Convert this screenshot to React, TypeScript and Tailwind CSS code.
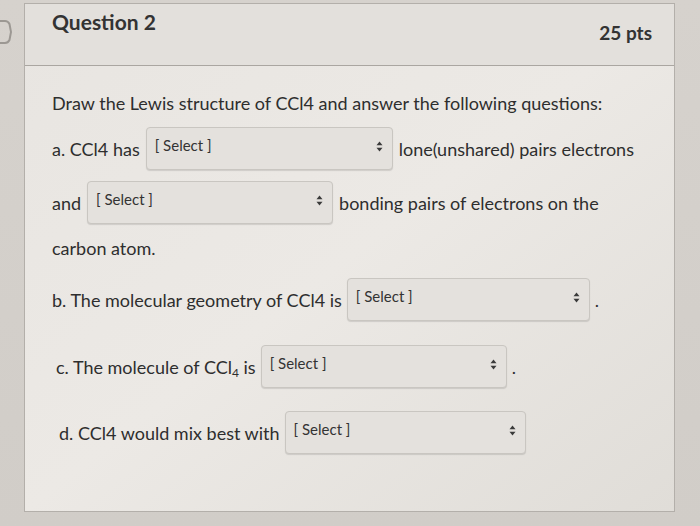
function Arrows() {
  return (
    <svg width="7" height="11" viewBox="0 0 7 11" className="shrink-0">
      <path d="M3.5 0.5 L6.5 4.3 L0.5 4.3 Z" fill="#3a3a3a" />
      <path d="M3.5 10.5 L6.5 6.7 L0.5 6.7 Z" fill="#3a3a3a" />
    </svg>
  );
}

function Select({ width }: { width: string }) {
  return (
    <div
      className={`${width} flex h-[43px] shrink-0 justify-between rounded-[4px] border border-[#c9c6c1] bg-[#e4e1dd] pt-[8px] pl-[8px] pr-[9px] shadow-[0_1px_1px_rgba(0,0,0,0.12)]`}
    >
      <span className="text-[15px] leading-[18px] text-[#333]">[ Select ]</span>
      <div className="pt-[5px]">
        <Arrows />
      </div>
    </div>
  );
}

export default function App() {
  return (
    <div
      className="h-[526px] w-[700px] overflow-hidden bg-gradient-to-b from-[#d6d2cd] to-[#d1cdc8] pt-[3px] pl-[24px] text-[#2e2e2e]"
      style={{ fontFamily: "Lato, 'Open Sans', sans-serif" }}
    >
      <div className="absolute left-0 top-[19px]">
        <svg width="12" height="26" viewBox="0 0 12 26">
          <path d="M-6 2 H5 Q8 2 9.5 5 L11 13 L9.5 21 Q8 24 5 24 H-6" fill="none" stroke="#9c9893" strokeWidth="2" />
        </svg>
      </div>
      <div className="flex h-[509px] w-[651px] flex-col border border-[#b3afaa] bg-gradient-to-br from-[#e8e5e1] via-[#ece9e5] to-[#e0ddd8]">
        <div className="flex h-[62px] shrink-0 justify-between border-b border-[#aaa6a1] bg-[#e3e0dc] pl-[27px] pr-[22px]">
          <h2 className="pt-[4px] text-[21px] font-bold leading-[28px] text-[#333]">Question 2</h2>
          <span className="pt-[16px] text-[19px] font-bold leading-[26px] text-[#333]">25 pts</span>
        </div>
        <div className="flex flex-col pl-[27px] text-[18px] leading-[24px]">
          <p className="mt-[25px]">Draw the Lewis structure of CCl4 and answer the following questions:</p>
          <div className="mt-[12px] flex items-center gap-[6px]">
            <span>a. CCl4 has</span>
            <Select width="w-[247px]" />
            <span>lone(unshared) pairs electrons</span>
          </div>
          <div className="mt-[11px] flex items-center gap-[6px]">
            <span>and</span>
            <Select width="w-[246px]" />
            <span>bonding pairs of electrons on the</span>
          </div>
          <p className="mt-[12px]">carbon atom.</p>
          <div className="mt-[18px] flex items-center gap-[5px]">
            <span>b. The molecular geometry of CCl4 is</span>
            <Select width="w-[243px]" />
            <span>.</span>
          </div>
          <div className="mt-[24px] flex items-center gap-[5px] pl-[4px]">
            <span>
              c. The molecule of CCl<sub className="text-[12px]">4</sub> is
            </span>
            <Select width="w-[246px]" />
            <span>.</span>
          </div>
          <div className="mt-[23px] flex items-center gap-[5px] pl-[7px]">
            <span>d. CCl4 would mix best with</span>
            <Select width="w-[241px]" />
          </div>
        </div>
      </div>
    </div>
  );
}
